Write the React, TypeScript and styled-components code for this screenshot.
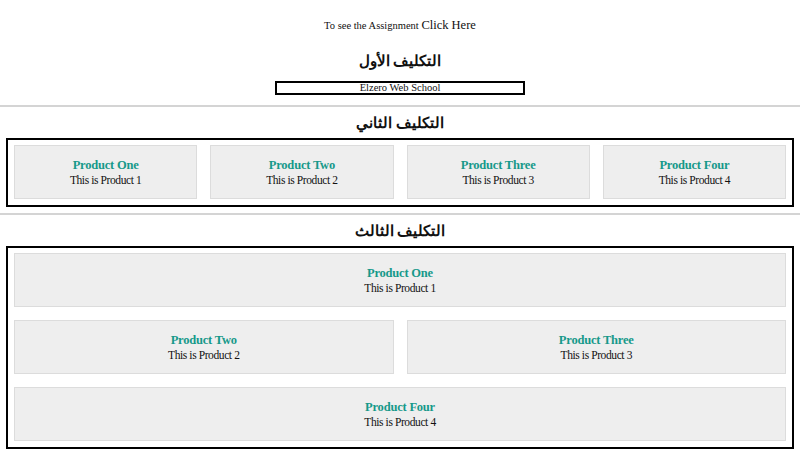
import React from "react";
import styled, { createGlobalStyle } from "styled-components";

const GlobalStyle = createGlobalStyle`
  * { box-sizing: border-box; }
  body {
    margin: 0;
    font-family: "Liberation Serif", "Times New Roman", serif;
    color: #111;
    background: #fff;
  }
`;

const Intro = styled.div`
  text-align: center;
  font-size: 10.5px;
  padding-top: 18px;
  height: 49px;
`;

const IntroLink = styled.span`
  font-size: 12.5px;
`;

const Heading = styled.h2`
  margin: 0;
  text-align: center;
  font-size: 15px;
  font-weight: bold;
  line-height: 24px;
  direction: rtl;
`;

const FieldRow = styled.div`
  display: flex;
  justify-content: center;
  margin-top: 8px;
  margin-bottom: 10px;
`;

const Field = styled.div`
  width: 250px;
  height: 14px;
  border: 2px solid #000;
  font-size: 10.5px;
  line-height: 10px;
  text-align: center;
`;

const Divider = styled.hr`
  margin: 0;
  border: none;
  border-top: 2px solid #d4d4d4;
`;

const Section = styled.div`
  padding: 4px 6px 6px;
`;

const Box = styled.div<{ $grid?: boolean }>`
  margin-top: 3px;
  border: 2px solid #000;
  padding: 5px 6px 6px;
  display: grid;
  gap: 13px;
  grid-template-columns: ${(p) => (p.$grid ? "1fr 1fr" : "repeat(4, 1fr)")};
`;

const Card = styled.div<{ $wide?: boolean }>`
  grid-column: ${(p) => (p.$wide ? "1 / -1" : "auto")};
  height: 54px;
  background: #eeeeee;
  border: 1px solid #dcdcdc;
  display: flex;
  flex-direction: column;
  align-items: center;
  justify-content: center;
`;

const CardTitle = styled.div`
  color: #16998a;
  font-weight: bold;
  font-size: 12.5px;
  line-height: 16px;
  letter-spacing: -0.2px;
`;

const CardText = styled.div`
  font-size: 11.5px;
  line-height: 15px;
  letter-spacing: -0.4px;
`;

const products = [
  { title: "Product One", text: "This is Product 1" },
  { title: "Product Two", text: "This is Product 2" },
  { title: "Product Three", text: "This is Product 3" },
  { title: "Product Four", text: "This is Product 4" },
];

const App = () => {
  return (
    <>
      <GlobalStyle />
      <Intro>
        To see the Assignment <IntroLink>Click Here</IntroLink>
      </Intro>
      <Heading>التكليف الأول</Heading>
      <FieldRow>
        <Field>Elzero Web School</Field>
      </FieldRow>
      <Divider />
      <Section>
        <Heading>التكليف الثاني</Heading>
        <Box>
          {products.map((p) => (
            <Card key={p.title}>
              <CardTitle>{p.title}</CardTitle>
              <CardText>{p.text}</CardText>
            </Card>
          ))}
        </Box>
      </Section>
      <Divider />
      <Section>
        <Heading>التكليف الثالث</Heading>
        <Box $grid>
          {products.map((p, i) => (
            <Card key={p.title} $wide={i === 0 || i === 3}>
              <CardTitle>{p.title}</CardTitle>
              <CardText>{p.text}</CardText>
            </Card>
          ))}
        </Box>
      </Section>
    </>
  );
};

export default App;
